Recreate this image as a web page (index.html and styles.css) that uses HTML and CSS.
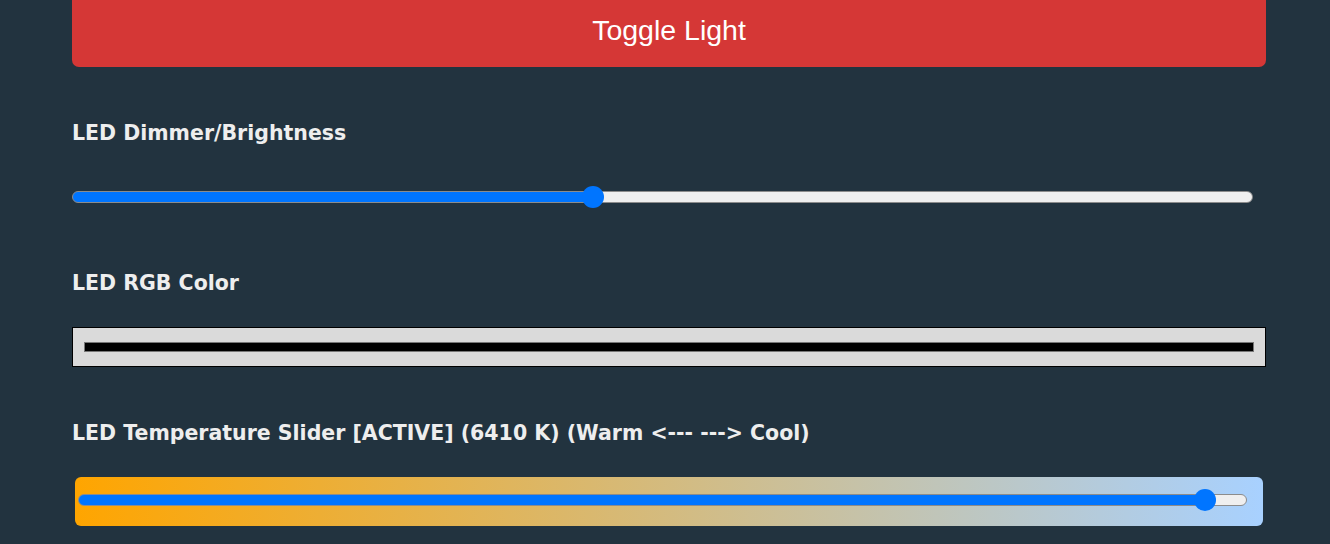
FILE: index.html
```html
<!DOCTYPE html>
<html lang="en">

<head>
    <meta charset="UTF-8"/>
    <meta content="width=device-width, initial-scale=1.0" name="viewport"/>
    <title>LED Control</title>
    <link rel="stylesheet" href="styles.css">
</head>

<body>
    <div class="w">
        <!-- 开关 -->
        <button class="toggle" id="toggle">Toggle Light</button>

        <!-- 亮度 -->
        <div class="field">
            <label class="title" for="brightness">LED Dimmer/Brightness</label>
            <div class="plain">
                <input class="range" id="brightness" type="range" min="0" max="100" value="44" style="--fill: 44.2%"/>
            </div>
        </div>

        <!-- 颜色 -->
        <div class="field">
            <label class="title" for="color">LED RGB Color</label>
            <input class="color" id="color" type="color" value="#000000"/>
        </div>

        <!-- 色温 -->
        <div class="field">
            <label class="title" for="temp">LED Temperature Slider [ACTIVE] (<span id="kelvin">6410</span> K) (Warm &lt;--- ---&gt; Cool)</label>
            <div class="temp-box">
                <input class="range temp" id="temp" type="range" min="2700" max="6500" value="6400" style="--fill: 96.4%"/>
            </div>
        </div>
    </div>

    <script>
        let ranges = document.querySelectorAll('.range');
        ranges.forEach(function (r) {
            r.addEventListener('input', function () {
                let p = (this.value - this.min) / (this.max - this.min) * 100;
                this.style.setProperty('--fill', p + '%');
                if (this.id === 'temp') {
                    document.querySelector('#kelvin').innerText = this.value;
                }
            });
        });
    </script>
</body>

</html>
```

FILE: styles.css
```css
* {
    margin: 0;
    padding: 0;
    box-sizing: border-box;
}

body {
    background: #22333f;
    font-family: "DejaVu Sans", Verdana, sans-serif;
}

.w {
    width: 1194px;
    margin-left: 72px;
}

.toggle {
    display: block;
    width: 100%;
    height: 67px;
    padding: 0 0 7px;
    border: none;
    border-radius: 0 0 7px 7px;
    background: #d53736;
    color: #fff;
    font: 28.5px "Liberation Sans", Arial, sans-serif;
    cursor: pointer;
}

.field {
    margin-top: 54px;
}

.title {
    display: block;
    height: 24px;
    line-height: 24px;
    margin-bottom: 32px;
    color: #eeeeee;
    font-size: 20.5px;
    font-weight: bold;
}

.plain {
    height: 40px;
    padding-top: 9px;
}

.range {
    -webkit-appearance: none;
    appearance: none;
    display: block;
    width: 1181px;
    height: 22px;
    background: transparent;
    outline: none;
}

.range::-webkit-slider-runnable-track {
    height: 12px;
    border: 1px solid #8c8c8c;
    border-radius: 6px;
    background: linear-gradient(to right, #0075ff var(--fill), #efefef var(--fill));
}

.range::-webkit-slider-thumb {
    -webkit-appearance: none;
    width: 22px;
    height: 22px;
    margin-top: -6px;
    border-radius: 50%;
    background: #0075ff;
    cursor: pointer;
}

.color {
    -webkit-appearance: none;
    appearance: none;
    display: block;
    width: 100%;
    height: 40px;
    padding: 0;
    border: 1px solid #000;
    background: #dadada;
    cursor: pointer;
}

.color::-webkit-color-swatch-wrapper {
    padding: 14px 11px;
}

.color::-webkit-color-swatch {
    border: 1px solid #777;
    border-radius: 0;
}

.temp-box {
    height: 49px;
    margin: 1px 3px 0;
    padding: 12px 16px 15px 3px;
    border-radius: 6px;
    background: linear-gradient(to right, #ffa500, #a8d1ff);
}

.temp-box .range {
    width: 100%;
}
```
